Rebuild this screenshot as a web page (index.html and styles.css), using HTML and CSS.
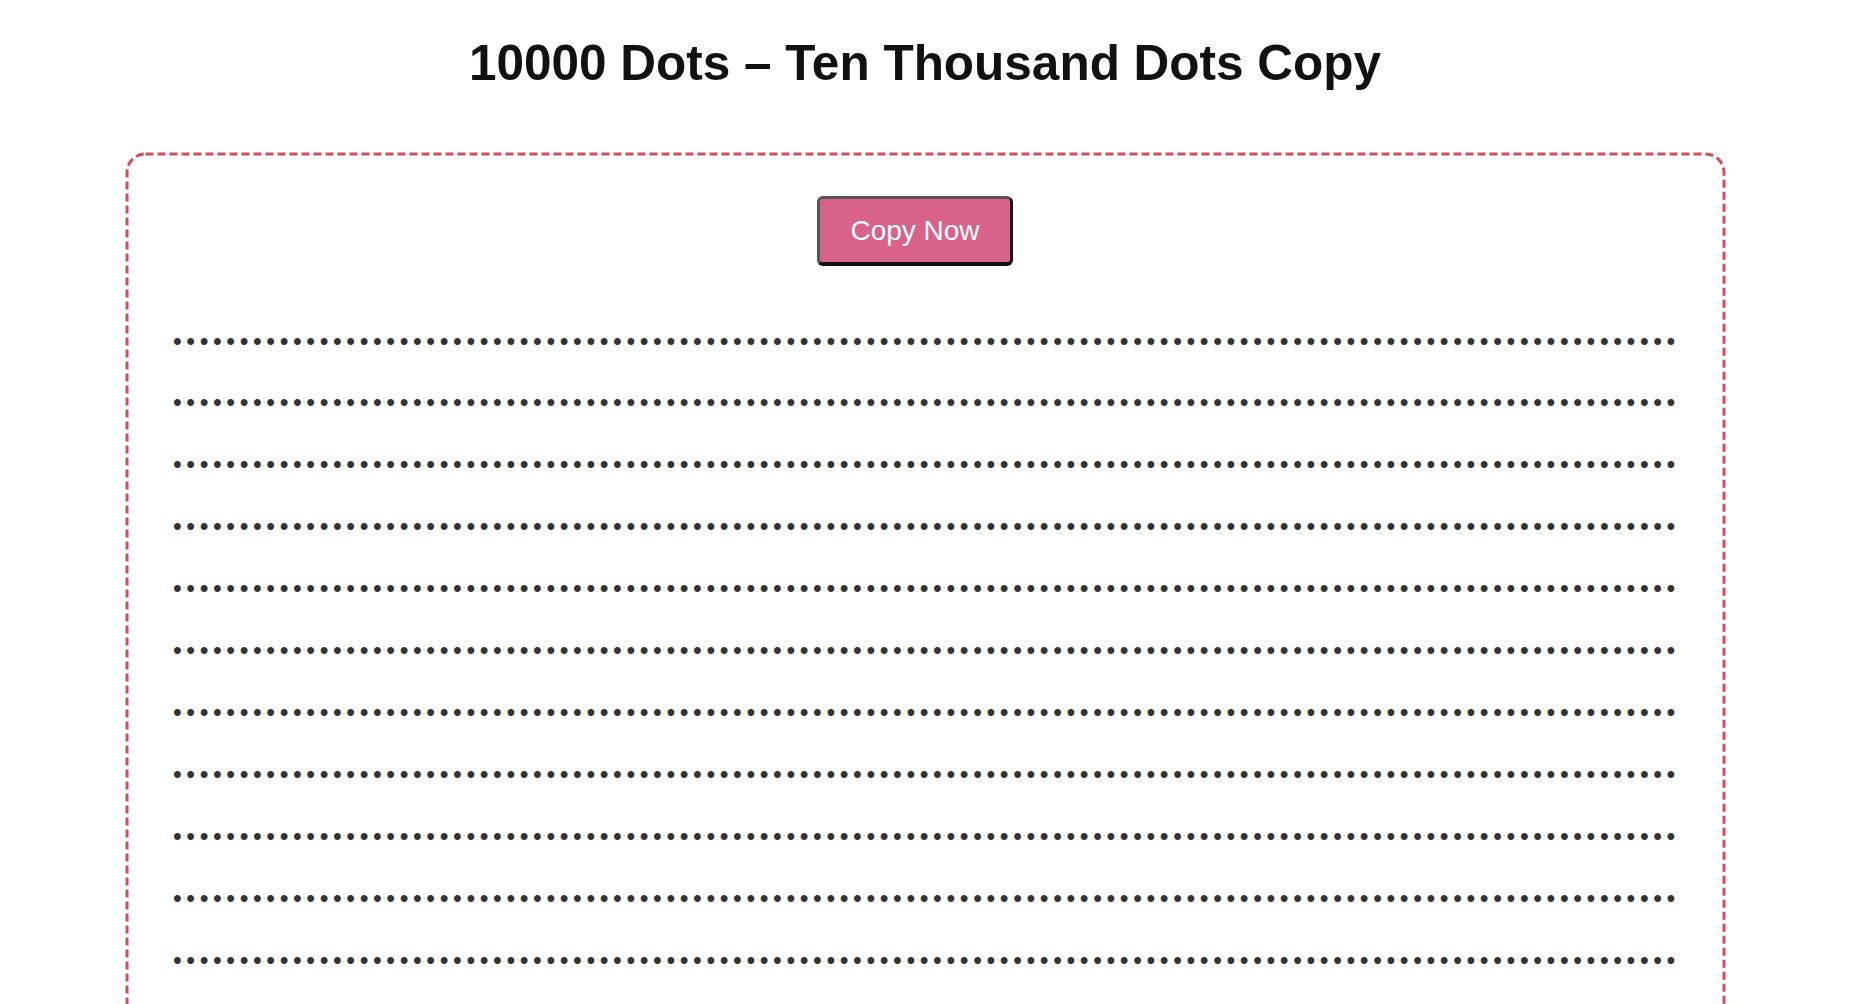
FILE: index.html
```html
<!DOCTYPE html>
<html lang="en">
<head>
<meta charset="utf-8">
<title>10000 Dots – Ten Thousand Dots Copy</title>
<link rel="stylesheet" href="styles.css">
</head>
<body>
<h1 class="title">10000 Dots – Ten Thousand Dots Copy</h1>
<section class="box">
  <svg class="frame" aria-hidden="true"><rect class="frame-rect" width="100%" height="100%" rx="18.5" ry="18.5"/></svg>
  <div class="actions">
    <button class="copy-btn" type="button">Copy Now</button>
  </div>
  <p class="dots" id="dots"></p>
</section>
<script src="script.js"></script>
</body>
</html>
```

FILE: styles.css
```css
body {
  margin: 0;
  padding-right: 6px;
  background: #fff;
  font-family: "Liberation Sans", Arial, sans-serif;
}

.title {
  margin: 35px 0 0;
  font-size: 49.5px;
  line-height: 56px;
  font-weight: 700;
  color: #111;
  text-align: center;
}

.box {
  position: relative;
  box-sizing: border-box;
  width: 1600px;
  margin: 61px auto 0;
  border-radius: 20px;
  padding: 44px 38px 43px 43px;
}

.frame {
  position: absolute;
  top: 1.5px;
  left: 1.5px;
  width: calc(100% - 3px);
  height: calc(100% - 3px);
  overflow: visible;
  pointer-events: none;
}

.frame-rect {
  fill: none;
  stroke: #cf4e60;
  stroke-width: 3;
  stroke-dasharray: 8 4;
}

.actions {
  display: flex;
  justify-content: center;
}

.copy-btn {
  box-sizing: border-box;
  width: 196px;
  height: 70px;
  margin-right: 25px;
  padding: 0;
  border-style: solid;
  border-width: 3px 3px 4px 3px;
  border-color: #555 #111 #111 #555;
  border-radius: 6px;
  background: #d9628a;
  color: #fff;
  font-family: "Liberation Sans", Arial, sans-serif;
  font-size: 28px;
  line-height: 63px;
  cursor: pointer;
}

.dots {
  margin: 44.5px 0 0 5px;
  font-family: "Liberation Sans", Arial, sans-serif;
  font-size: 25px;
  line-height: 61.9px;
  letter-spacing: 4.583px;
  color: #333;
  word-break: break-all;
  overflow-wrap: anywhere;
}
```

FILE: script.js
```js
document.getElementById('dots').textContent = '\u2022'.repeat(10000);
document.querySelector('.copy-btn').addEventListener('click', function () {
  var text = '.'.repeat(10000);
  if (navigator.clipboard) { navigator.clipboard.writeText(text); }
});
```
